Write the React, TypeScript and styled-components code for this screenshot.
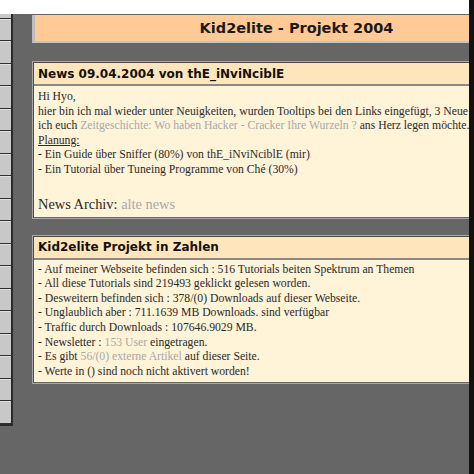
import React from 'react'
import styled, { createGlobalStyle } from 'styled-components'

const Global = createGlobalStyle`
  html, body {
    margin: 0;
    padding: 0;
    width: 474px;
    height: 474px;
    overflow: hidden;
    background: #666666;
  }
`

const Page = styled.div`
  width: 474px;
  height: 474px;
  display: flex;
  background: #666666;
`

const Main = styled.div`
  flex: 1;
  display: flex;
  flex-direction: column;
  min-width: 0;
`

const RightEdge = styled.div`
  width: 5px;
  background: #111;
`

const TopStrip = styled.div`
  height: 14px;
  background: #ffffff;
`

const Body = styled.div`
  flex: 1;
  display: flex;
  min-height: 0;
`

const Sidebar = styled.div`
  width: 11px;
  display: flex;
  flex-direction: column;
  align-self: flex-start;
  border-right: 2px solid #2a2a2a;
  border-bottom: 2px solid #2a2a2a;
`

const NavButton = styled.div<{ $h: number }>`
  height: ${p => p.$h}px;
  box-sizing: border-box;
  background: #c8c8c8;
  border-bottom: 1px solid #2f2f2f;
  border-top: 1px solid #e0e0e0;
  &:first-child {
    border-top: none;
  }
`

const Gutter = styled.div`
  width: 19px;
`

const Content = styled.div`
  flex: 1;
  min-width: 0;
  overflow: hidden;
  padding-top: 1px;
`

const Wide = styled.div`
  width: 526px;
`

const Header = styled.div`
  height: 26px;
  background: #ffca96;
  border-left: 3px solid #bdbdbd;
  border-bottom: 2px solid #c4c4c4;
  display: flex;
  align-items: center;
  justify-content: center;
  font-family: "DejaVu Sans", Verdana, sans-serif;
  font-weight: bold;
  font-size: 14.5px;
  color: #1a1a1a;
`

const Box = styled.div<{ $top: number }>`
  margin-top: ${p => p.$top}px;
  border: 1px solid #a8a8a8;
  border-right: none;
  box-shadow: inset 1px 1px 0 #4a4a4a;
  padding: 1px 0 1px 1px;
  background: #666;
`

const BoxTitle = styled.div`
  height: 21px;
  background: #ffe5bb;
  border-bottom: 2px solid #8a8a8a;
  display: flex;
  align-items: center;
  padding-left: 4px;
  font-family: "DejaVu Sans", Verdana, sans-serif;
  font-weight: bold;
  font-size: 12px;
  color: #111;
`

const BoxBody = styled.div<{ $pt: number; $pb: number }>`
  background: #fff3d8;
  padding: ${p => p.$pt}px 0 ${p => p.$pb}px 4px;
  font-family: "Liberation Serif", "Times New Roman", serif;
  font-size: 11.7px;
  line-height: 14.6px;
  color: #2a2a2a;
  white-space: nowrap;
`

const Line = styled.div``

const Link = styled.span`
  color: #a9a9a9;
`

const Under = styled.span`
  text-decoration: underline;
`

const Archive = styled.div`
  margin-top: 17px;
  font-size: 14.4px;
  line-height: 18px;
`

const heights = [5, ...Array.from({ length: 18 }, (_, i) => (i % 2 === 0 ? 22 : 23))]

const stats: React.ReactNode[] = [
  '- Auf meiner Webseite befinden sich : 516 Tutorials beiten Spektrum an Themen',
  '- All diese Tutorials sind 219493 geklickt gelesen worden.',
  '- Desweitern befinden sich : 378/(0) Downloads auf dieser Webseite.',
  '- Unglaublich aber : 711.1639 MB Downloads. sind verfügbar',
  '- Traffic durch Downloads : 107646.9029 MB.',
  <>- Newsletter : <Link>153 User</Link> eingetragen.</>,
  <>- Es gibt <Link>56/(0) externe Artikel</Link> auf dieser Seite.</>,
  '- Werte in () sind noch nicht aktivert worden!',
]

export default function App() {
  return (
    <Page>
      <Global />
      <Main>
        <TopStrip />
        <Body>
          <Sidebar>
            {heights.map((h, i) => (
              <NavButton key={i} $h={h} />
            ))}
          </Sidebar>
          <Gutter />
          <Content>
            <Wide>
              <Header>Kid2elite - Projekt 2004</Header>

              <Box $top={18}>
                <BoxTitle>News 09.04.2004 von thE_iNviNciblE</BoxTitle>
                <BoxBody $pt={4} $pb={4}>
                  <Line>Hi Hyo,</Line>
                  <Line>hier bin ich mal wieder unter Neuigkeiten, wurden Tooltips bei den Links eingefügt, 3 Neue Tutorials, die</Line>
                  <Line>
                    ich euch <Link>Zeitgeschichte: Wo haben Hacker - Cracker Ihre Wurzeln ?</Link> ans Herz legen möchte.
                  </Line>
                  <Line><Under>Planung:</Under></Line>
                  <Line>- Ein Guide über Sniffer (80%) von thE_iNviNciblE (mir)</Line>
                  <Line>- Ein Tutorial über Tuneing Programme von Ché (30%)</Line>
                  <Archive>News Archiv: <Link>alte news</Link></Archive>
                </BoxBody>
              </Box>

              <Box $top={16}>
                <BoxTitle>Kid2elite Projekt in Zahlen</BoxTitle>
                <BoxBody $pt={3} $pb={3}>
                  {stats.map((s, i) => (
                    <Line key={i}>{s}</Line>
                  ))}
                </BoxBody>
              </Box>
            </Wide>
          </Content>
        </Body>
      </Main>
      <RightEdge />
    </Page>
  )
}
